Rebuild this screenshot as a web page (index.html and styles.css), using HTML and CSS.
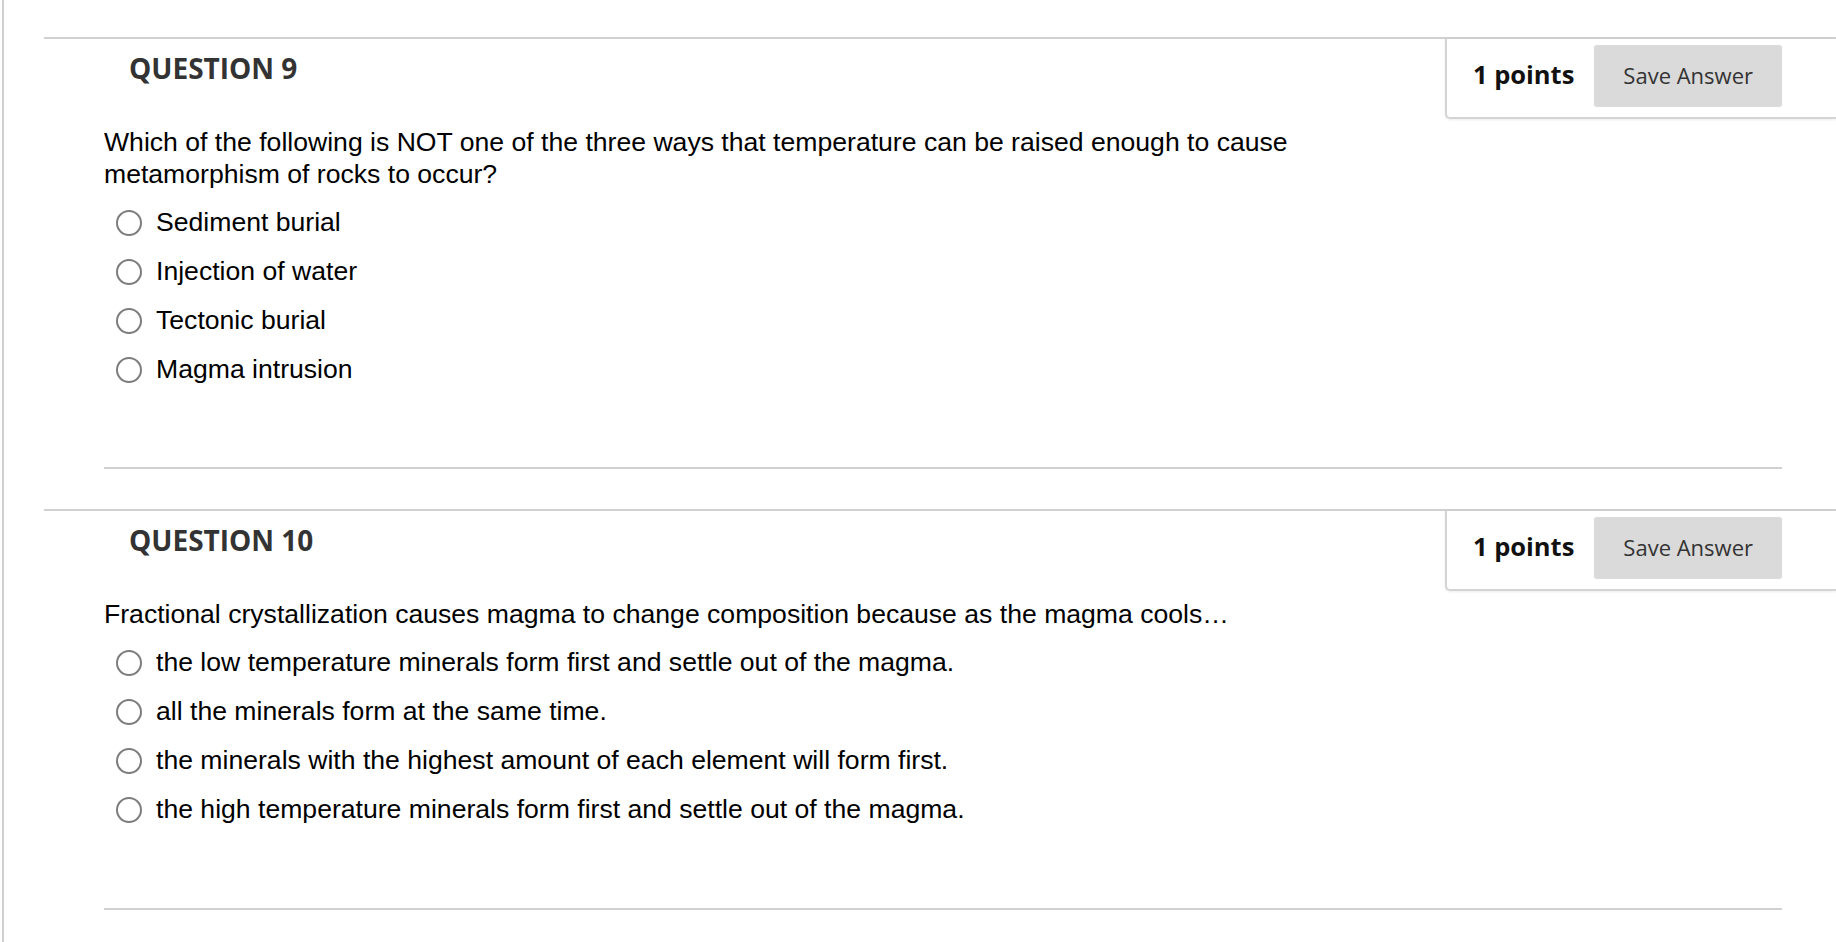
FILE: index.html
```html
<!DOCTYPE html>
<html lang="en">
<head>
    <meta charset="UTF-8">
    <meta name="viewport" content="width=device-width, initial-scale=1.0">
    <title>Take Test</title>
    <link rel="stylesheet" href="styles.css">
</head>
<body>
    <div class="page">
        <div class="question">
            <div class="question-header">
                <h3 class="question-title">QUESTION 9</h3>
                <div class="points-box">
                    <span class="points">1 points</span>
                    <button class="save-btn">Save Answer</button>
                </div>
            </div>
            <div class="question-body">
                <p class="question-text">Which of the following is NOT one of the three ways that temperature can be raised enough to cause metamorphism of rocks to occur?</p>
                <div class="options">
                    <label class="option"><input type="radio" name="q9"> Sediment burial</label>
                    <label class="option"><input type="radio" name="q9"> Injection of water</label>
                    <label class="option"><input type="radio" name="q9"> Tectonic burial</label>
                    <label class="option"><input type="radio" name="q9"> Magma intrusion</label>
                </div>
            </div>
        </div>

        <div class="question">
            <div class="question-header">
                <h3 class="question-title">QUESTION 10</h3>
                <div class="points-box">
                    <span class="points">1 points</span>
                    <button class="save-btn">Save Answer</button>
                </div>
            </div>
            <div class="question-body">
                <p class="question-text">Fractional crystallization causes magma to change composition because as the magma cools…</p>
                <div class="options">
                    <label class="option"><input type="radio" name="q10"> the low temperature minerals form first and settle out of the magma.</label>
                    <label class="option"><input type="radio" name="q10"> all the minerals form at the same time.</label>
                    <label class="option"><input type="radio" name="q10"> the minerals with the highest amount of each element will form first.</label>
                    <label class="option"><input type="radio" name="q10"> the high temperature minerals form first and settle out of the magma.</label>
                </div>
            </div>
        </div>
    </div>
</body>
</html>
```

FILE: styles.css
```css
body {
    margin: 0;
    background-color: #fff;
    font-family: "Liberation Sans", Arial, sans-serif;
    color: #000;
}
.page {
    margin-left: 2px;
    border-left: 2px solid #cfcfcf;
    min-height: 100vh;
    box-sizing: border-box;
    padding-top: 37px;
}
.question {
    margin-left: 40px;
    border-top: 2px solid #d0d0d0;
}
.question + .question {
    margin-top: 40px;
}
.question-header {
    display: flex;
    align-items: flex-start;
}
.question-title {
    margin: 0;
    padding: 10px 0 0 85px;
    font-family: "Open Sans", sans-serif;
    font-weight: bold;
    font-size: 28px;
    line-height: 38px;
    color: #333;
}
.points-box {
    margin-left: auto;
    display: flex;
    align-items: center;
    gap: 20px;
    padding: 6px 54px 10px 26px;
    border-left: 2px solid #d4d4d4;
    border-bottom: 2px solid #d4d4d4;
    border-bottom-left-radius: 5px;
    box-shadow: 0 1px 3px rgba(0, 0, 0, 0.08);
}
.points {
    padding-bottom: 5px;
    font-family: "Open Sans", sans-serif;
    font-weight: bold;
    font-size: 25.5px;
    color: #111;
}
.save-btn {
    height: 62px;
    padding: 0 29px 3px;
    font-family: "Open Sans", sans-serif;
    font-size: 22px;
    color: #333;
    background-color: #dadada;
    border: none;
    border-radius: 3px;
    cursor: pointer;
}
.question-body {
    margin: 0 54px 0 60px;
    padding-bottom: 73px;
    border-bottom: 2px solid #d0d0d0;
}
.question-text {
    margin: 8px 0 0;
    font-size: 26.6px;
    line-height: 31.6px;
    max-width: 1210px;
}
.options {
    margin-top: 8px;
}
.option {
    display: flex;
    align-items: center;
    padding: 8.7px 0;
    font-size: 26.6px;
    line-height: 31.6px;
}
.option input {
    appearance: none;
    -webkit-appearance: none;
    width: 26px;
    height: 26px;
    margin: 0 14px 0 12px;
    border: 2px solid #7d7d7d;
    border-radius: 50%;
    background: #fff;
    box-sizing: border-box;
    flex-shrink: 0;
}
```
